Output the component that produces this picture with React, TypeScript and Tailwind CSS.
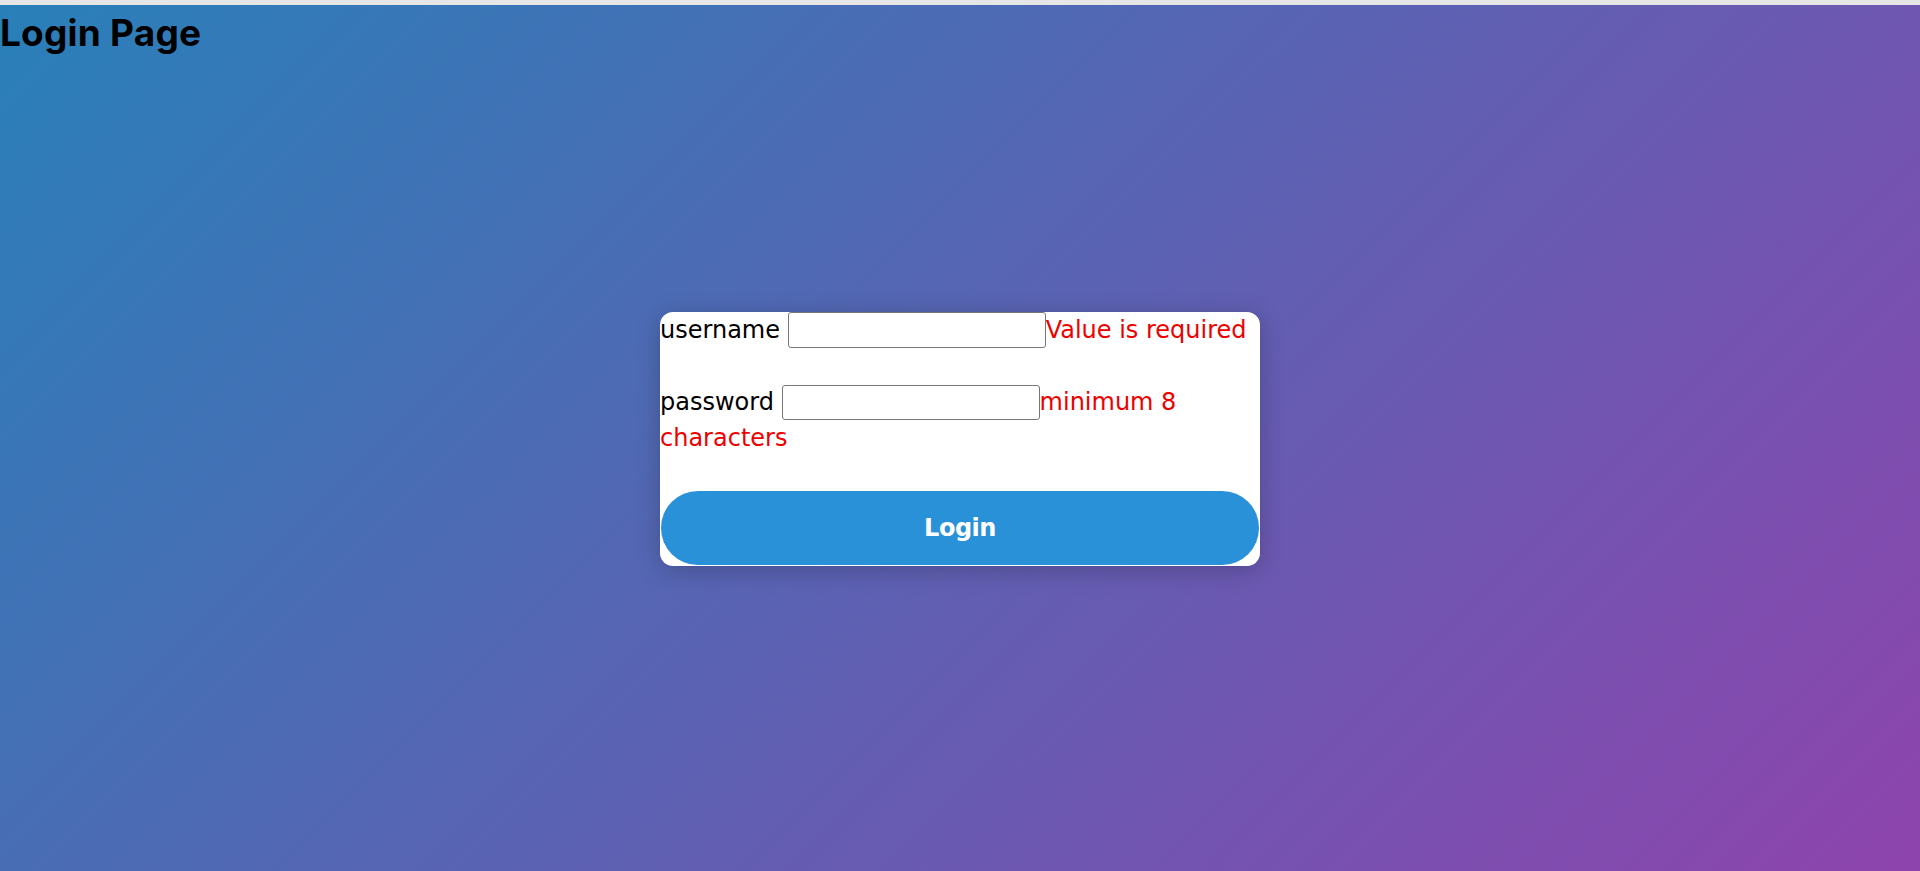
import React from "react";

export default function App() {
  return (
    <div className="w-[1920px] h-[871px] flex flex-col overflow-hidden">
      <div className="h-[5px] bg-[#e6e6e6]" />
      <div className="flex-1 flex flex-col bg-[linear-gradient(135deg,#2980b9,#8e44ad)]">
        <div className="h-[56px] pt-[5px]">
          <h1 className="m-0 text-[37px] leading-[45px] font-bold text-black font-['Inter',sans-serif] tracking-[0.2px]">
            Login Page
          </h1>
        </div>
        <div className="flex-1 flex items-center justify-center">
          <form
            className="w-[600px] h-[254px] bg-white rounded-[13px] shadow-[0_4px_24px_rgba(0,0,0,0.22)] flex flex-col pb-px font-['DejaVu_Sans',sans-serif] text-[24px] leading-[36px] text-black"
            onSubmit={(e) => e.preventDefault()}
          >
            <div>
              username{" "}
              <input
                type="text"
                className="inline-block align-top w-[258px] h-[36px] border border-[#767676] rounded-[3px] bg-white outline-none"
              />
              <span className="text-[#ee0000]">Value is required</span>
            </div>
            <div className="mt-[36px]">
              password{" "}
              <input
                type="password"
                className="inline-block align-top w-[258px] h-[35px] mt-px border border-[#767676] rounded-[3px] bg-white outline-none"
              />
              <span className="text-[#ee0000]">minimum 8 characters</span>
            </div>
            <button
              type="submit"
              className="mt-[35px] mx-px h-[74px] rounded-full bg-[#2991d8] text-white text-[24px] font-bold font-['DejaVu_Sans',sans-serif] tracking-[-0.5px]"
            >
              Login
            </button>
          </form>
        </div>
        <div className="h-[54px]" />
      </div>
    </div>
  );
}
